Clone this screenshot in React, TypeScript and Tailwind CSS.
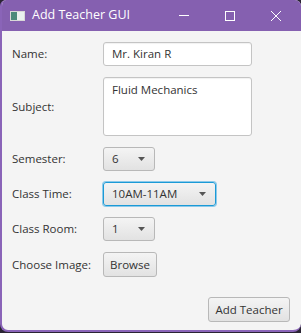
import React from 'react'

const font = { fontFamily: '"Open Sans", "Noto Sans", sans-serif' }

const Arrow = () => (
    <svg width="7" height="4" viewBox="0 0 7 4" className="flex-none">
        <path d="M0 0 L7 0 L3.5 4 Z" fill="#555" />
    </svg>
)

const Combo: React.FC<{ value: string; width: string; focused?: boolean }> = ({ value, width, focused }) => (
    <div
        className={`${width} h-6 flex items-center justify-between pl-[8px] pr-[9px] rounded-[3px] border bg-gradient-to-b from-[#f4f4f4] to-[#e2e2e2] text-[11.5px] text-[#333] ${
            focused ? 'border-[#1b9ad6] ring-1 ring-[#8cc9ea]' : 'border-[#b8b8b8]'
        }`}
    >
        <span>{value}</span>
        <Arrow />
    </div>
)

const Row: React.FC<{ label: string; children: React.ReactNode }> = ({ label, children }) => (
    <div className="flex items-center">
        <span className="w-[91px] text-[11.5px] text-[#333]">{label}</span>
        {children}
    </div>
)

const App: React.FC = () => {
    return (
        <div className="w-[301px] h-[333px] bg-[#2a2433] overflow-hidden" style={font}>
            <div className="w-[301px] h-[332px] rounded-t-[6px] rounded-b-[8px] border-l-2 border-b-2 border-[#8a64b8] bg-[#f4f4f4] overflow-hidden flex flex-col">
                <div className="h-[31px] flex-none bg-[#8560b0] flex items-center text-white">
                    <div className="w-[15px] h-[10px] ml-[8px] flex border border-[#d8d8d8] bg-white">
                        <div className="w-[6px] bg-[#4a8a7a]" />
                        <div className="flex-1 bg-[#e9f1ee]" />
                    </div>
                    <span className="ml-[7px] text-[12.5px]">Add Teacher GUI</span>
                    <div className="ml-auto mr-[2px] flex items-center">
                        <div className="w-[46px] flex justify-center">
                            <div className="w-[10px] h-px bg-white" />
                        </div>
                        <div className="w-[46px] flex justify-center">
                            <div className="w-[10px] h-[10px] border border-white" />
                        </div>
                        <div className="w-[46px] flex justify-center">
                            <svg width="10" height="10" viewBox="0 0 10 10">
                                <path d="M0 0 L10 10 M10 0 L0 10" stroke="white" strokeWidth="1" />
                            </svg>
                        </div>
                    </div>
                </div>
                <div className="flex flex-col gap-[11px] pl-[10px] pt-[11px]">
                    <Row label="Name:">
                        <div className="w-[149px] h-6 flex items-center pl-[8px] rounded-[3px] border border-[#c4c4c4] bg-white text-[11.5px] text-[#333] shadow-[inset_0_1px_1px_rgba(0,0,0,0.06)]">
                            Mr. Kiran R
                        </div>
                    </Row>
                    <Row label="Subject:">
                        <div className="w-[149px] h-[59px] pl-[8px] pt-[3px] rounded-[3px] border border-[#c4c4c4] bg-white text-[11.5px] text-[#333] shadow-[inset_0_1px_1px_rgba(0,0,0,0.06)]">
                            Fluid Mechanics
                        </div>
                    </Row>
                    <Row label="Semester:">
                        <Combo value="6" width="w-[52px]" />
                    </Row>
                    <Row label="Class Time:">
                        <Combo value="10AM-11AM" width="w-[113px]" focused />
                    </Row>
                    <Row label="Class Room:">
                        <Combo value="1" width="w-[52px]" />
                    </Row>
                    <Row label="Choose Image:">
                        <button className="w-[54px] h-[25px] rounded-[3px] border border-[#b8b8b8] bg-gradient-to-b from-[#f4f4f4] to-[#e2e2e2] text-[11.5px] text-[#333]">
                            Browse
                        </button>
                    </Row>
                </div>
                <div className="flex justify-end pr-[11px] mt-[20px]">
                    <button className="w-[82px] h-[25px] rounded-[3px] border border-[#b8b8b8] bg-gradient-to-b from-[#f4f4f4] to-[#e2e2e2] text-[11.5px] text-[#333]">
                        Add Teacher
                    </button>
                </div>
            </div>
        </div>
    )
}

export default App
